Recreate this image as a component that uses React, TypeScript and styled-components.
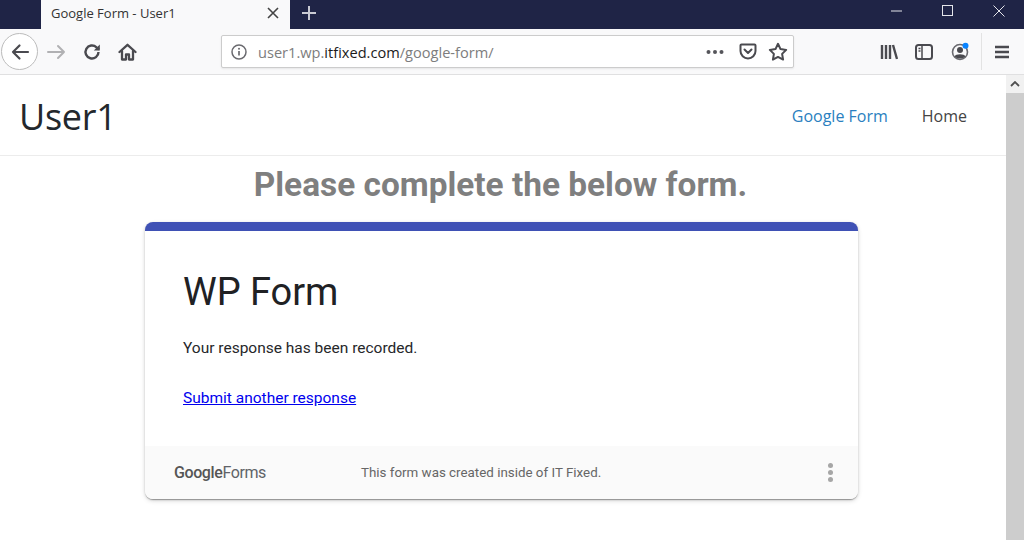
import React from "react";
import styled, { createGlobalStyle } from "styled-components";

const Global = createGlobalStyle`
  html, body { margin: 0; padding: 0; width: 1024px; height: 540px; overflow: hidden; background: #fff; }
  * { box-sizing: border-box; }
`;

const Page = styled.div`
  width: 1024px; height: 540px; display: flex; flex-direction: column; overflow: hidden;
  font-family: "Roboto", sans-serif;
`;
const TabBar = styled.div`
  height: 29px; flex: none; background: #1f2446; display: flex; align-items: stretch; padding-left: 41px;
`;
const Tab = styled.div`
  width: 249px; background: #f9f9fa; display: flex; align-items: center; justify-content: space-between;
  padding: 0 11px 3px 10px; font: 13px "Open Sans", sans-serif; color: #333;
`;
const NewTab = styled.div`
  width: 38px; display: flex; align-items: center; justify-content: center; padding-bottom: 3px;
`;
const Spacer = styled.div`flex: 1;`;
const WinButton = styled.div`
  width: 51px; display: flex; align-items: center; justify-content: center; padding-bottom: 8px;
`;
const WinButtons = styled.div`display: flex;`;
const Toolbar = styled.div`
  height: 46px; flex: none; background: #f9f9fa; border-bottom: 1px solid #e0e0e1; position: relative;
  display: flex; align-items: center; padding-left: 1px;
`;
const BackCircle = styled.div`
  width: 37px; height: 37px; border-radius: 50%; background: #fff; border: 1px solid #bcbcbc;
  display: flex; align-items: center; justify-content: center; flex: none;
`;
const NavIcon = styled.div`
  width: 36px; height: 30px; display: flex; align-items: center; justify-content: center; flex: none;
`;
const HomeIcon = styled(NavIcon)`margin-left: -1px;`;
const NavGroup = styled.div`display: flex; align-items: center; margin-right: 76px;`;
const UrlBar = styled.div`
  width: 573px; height: 33px; background: #fff; border: 1px solid #ccc; border-radius: 2px;
  box-shadow: 0 1px 2px rgba(0,0,0,.08); display: flex; align-items: center; padding: 0 5px 0 9px; flex: none;
`;
const UrlText = styled.div`
  font: 14.6px "Open Sans", sans-serif; color: #7d7d7d; margin-left: 11px; flex: 1; white-space: nowrap;
`;
const UrlStrong = styled.span`color: #1b1b1b;`;
const UrlIcons = styled.div`display: flex; align-items: center; gap: 10px;`;
const MoreDots = styled.svg`margin-right: 5px;`;
const PocketIcon = styled.svg`margin-right: 1px;`;
const RightIcons = styled.div`display: flex; align-items: center; margin-left: 77px;`;
const RightIcon = styled.div`
  width: 35.5px; height: 30px; display: flex; align-items: center; justify-content: center; position: relative; flex: none;
`;
const Divider = styled.div`width: 1px; height: 37px; background: #e3e3e3; margin: 0 3px; flex: none;`;
const Main = styled.div`flex: 1; display: flex; min-height: 0;`;
const Content = styled.div`flex: 1; min-width: 0; display: flex; flex-direction: column;`;
const Scrollbar = styled.div`width: 18px; flex: none; background: #f1f1f1; display: flex; flex-direction: column;`;
const ScrollUp = styled.div`height: 18px; background: #f1f1f1; display: flex; align-items: center; justify-content: center;`;
const ScrollThumb = styled.div`flex: 1; background: #cdcdcd;`;
const Header = styled.header`
  height: 81px; flex: none; border-bottom: 1px solid #ececec; display: flex; align-items: center;
  justify-content: space-between; padding: 2px 39px 0 19px;
`;
const Brand = styled.div`font: 36px "Open Sans", sans-serif; color: #23282d; letter-spacing: -.3px;`;
const Nav = styled.nav`display: flex; gap: 34px;`;
const NavLink = styled.a<{ $active?: boolean }>`
  font: 16px "Open Sans", sans-serif; color: ${(p) => (p.$active ? "#2a7fc0" : "#444")};
`;
const Heading = styled.h1`
  margin: 8px 0 0; height: 58px; text-align: center; font: 700 33.4px/41px "Roboto", sans-serif; color: #7f7f7f;
  padding-right: 5px;
`;
const Card = styled.section`
  width: 713px; height: 277px; margin-left: 145px; background: #fff; border-radius: 8px;
  border-top: 9px solid #3f51b5; overflow: hidden; display: flex; flex-direction: column;
  box-shadow: 0 2px 1px -1px rgba(0,0,0,.2), 0 1px 1px 0 rgba(0,0,0,.14), 0 1px 3px 0 rgba(0,0,0,.12), 0 2px 5px rgba(0,0,0,.12);
`;
const CardBody = styled.div`flex: 1; padding: 38px 38px 0;`;
const FormTitle = styled.h2`margin: 0; font: 400 38px/46px "Roboto", sans-serif; letter-spacing: -.05px; color: #202124;`;
const Recorded = styled.p`margin: 23px 0 0; font: 15.5px/20px "Roboto", sans-serif; color: #26272a;`;
const Another = styled.a`
  display: block; margin-top: 30px; font: 15.5px/20px "Roboto", sans-serif; color: #0000ee; text-decoration: underline;
`;
const CardFooter = styled.div`
  height: 53px; flex: none; background: #fafafa; display: flex; align-items: center; padding: 0 25px 0 29px;
`;
const Logo = styled.div`
  width: 187px; font: 16px "Roboto", sans-serif; color: #5f6368; letter-spacing: -.4px;
`;
const LogoStrong = styled.span`font-weight: 500; color: #555;`;
const Notice = styled.div`flex: 1; font: 13.37px "Roboto", sans-serif; color: #666;`;
const Dots = styled.div`display: flex; flex-direction: column; gap: 2px;`;
const Dot = styled.i`display: block; width: 5px; height: 5px; border-radius: 50%; background: #a6a6a6;`;

const S = { fill: "none", stroke: "#4a4a4f", strokeWidth: 2, strokeLinecap: "round" as const, strokeLinejoin: "round" as const };

export default function App() {
  return (
    <>
      <Global />
      <Page>
        <TabBar>
          <Tab>
            <span>Google Form - User1</span>
            <svg width="12" height="12" viewBox="0 0 12 12"><path d="M1 1l10 10M11 1L1 11" stroke="#444" strokeWidth="1.6" /></svg>
          </Tab>
          <NewTab>
            <svg width="16" height="16" viewBox="0 0 16 16"><path d="M8 1v14M1 8h14" stroke="#c9cad3" strokeWidth="2" /></svg>
          </NewTab>
          <Spacer />
          <WinButtons>
            <WinButton><svg width="12" height="2" viewBox="0 0 12 2"><path d="M0 1h11" stroke="#e4e5ea" strokeWidth="1" /></svg></WinButton>
            <WinButton><svg width="12" height="12" viewBox="0 0 12 12"><rect x=".5" y=".5" width="10" height="10" fill="none" stroke="#e4e5ea" /></svg></WinButton>
            <WinButton><svg width="12" height="12" viewBox="0 0 12 12"><path d="M.5.5l11 11M11.500.5l-11 11" stroke="#e4e5ea" /></svg></WinButton>
          </WinButtons>
        </TabBar>
        <Toolbar>
          <NavGroup>
            <BackCircle>
              <svg width="20" height="18" viewBox="0 0 20 18"><path d="M18 9H3M9.500 2.500L3 9l6.500 6.500" {...S} strokeWidth={2.2} /></svg>
            </BackCircle>
            <NavIcon>
              <svg width="19" height="16" viewBox="0 0 19 16"><path d="M1 8h16M11 2l6 6-6 6" {...S} stroke="#b1b1b3" /></svg>
            </NavIcon>
            <NavIcon>
              <svg width="18" height="18" viewBox="0 0 18 18"><path d="M15.500 9a6.500 6.500 0 1 1-2-4.700L16 6.500" {...S} strokeLinecap="butt" strokeWidth={2.4} /><path d="M16.800 1.500v6h-6z" fill="#4a4a4f" /></svg>
            </NavIcon>
            <HomeIcon>
              <svg width="19" height="18" viewBox="0 0 19 18"><path d="M1.500 9L9.500 1.800 17.500 9" {...S} strokeWidth={2.3} /><path d="M4 8v8.500h4V11.500h3v5h4V8" {...S} strokeWidth={2.3} /></svg>
            </HomeIcon>
          </NavGroup>
          <UrlBar>
            <svg width="16" height="16" viewBox="0 0 16 16"><circle cx="8" cy="8" r="7" fill="none" stroke="#6a6a6f" strokeWidth="1.500" /><path d="M8 7v4.500" stroke="#6a6a6f" strokeWidth="1.700" /><circle cx="8" cy="4.700" r="1" fill="#6a6a6f" /></svg>
            <UrlText>user1.wp.<UrlStrong>itfixed.com</UrlStrong>/google-form/</UrlText>
            <UrlIcons>
              <MoreDots width="18" height="6" viewBox="0 0 18 6"><circle cx="2.500" cy="3" r="2" fill="#55555a" /><circle cx="9" cy="3" r="2" fill="#55555a" /><circle cx="15.500" cy="3" r="2" fill="#55555a" /></MoreDots>
              <PocketIcon width="18" height="17" viewBox="0 0 18 17"><path d="M2.500 1.500h13a1 1 0 0 1 1 1V8a7.500 7.500 0 0 1-15 0V2.500a1 1 0 0 1 1-1z" {...S} /><path d="M5.500 6.500L9 10l3.500-3.500" {...S} /></PocketIcon>
              <svg width="20" height="19" viewBox="0 0 20 19"><path d="M10 1.800l2.500 5.300 5.700.8-4.100 4 1 5.700L10 14.900l-5.100 2.700 1-5.700-4.100-4 5.700-.8z" {...S} /></svg>
            </UrlIcons>
          </UrlBar>
          <RightIcons>
            <RightIcon>
              <svg width="18" height="16" viewBox="0 0 18 16"><path d="M2 1v14M6 1v14M10 1v14M13 1l4 14" {...S} strokeWidth={2.4} strokeLinecap="butt" /></svg>
            </RightIcon>
            <RightIcon>
              <svg width="18" height="16" viewBox="0 0 18 16"><rect x="1" y="1" width="16" height="14" rx="2.500" {...S} /><path d="M7 1v14M3.500 4.500h2M3.500 7h2" {...S} strokeWidth={1.5} strokeLinecap="butt" /></svg>
            </RightIcon>
            <RightIcon>
              <svg width="20" height="20" viewBox="0 0 20 20"><circle cx="10" cy="10" r="7.500" fill="none" stroke="#6a6a6f" strokeWidth="1.600" /><circle cx="10" cy="8" r="3" fill="#4a4a4f" /><path d="M4.500 14.500c1-3 10-3 11 0l-3 2h-5z" fill="#4a4a4f" /><circle cx="15.500" cy="3.700" r="3" fill="#0a84ff" /></svg>
            </RightIcon>
            <Divider />
            <RightIcon>
              <svg width="16" height="14" viewBox="0 0 16 14"><path d="M1 2h14M1 7h14M1 12h14" {...S} strokeWidth={2.3} strokeLinecap="butt" /></svg>
            </RightIcon>
          </RightIcons>
        </Toolbar>
        <Main>
          <Content>
            <Header>
              <Brand>User1</Brand>
              <Nav>
                <NavLink $active>Google Form</NavLink>
                <NavLink>Home</NavLink>
              </Nav>
            </Header>
            <Heading>Please complete the below form.</Heading>
            <Card>
              <CardBody>
                <FormTitle>WP Form</FormTitle>
                <Recorded>Your response has been recorded.</Recorded>
                <Another>Submit another response</Another>
              </CardBody>
              <CardFooter>
                <Logo><LogoStrong>Google</LogoStrong>Forms</Logo>
                <Notice>This form was created inside of IT Fixed.</Notice>
                <Dots><Dot /><Dot /><Dot /></Dots>
              </CardFooter>
            </Card>
          </Content>
          <Scrollbar>
            <ScrollUp>
              <svg width="10" height="6" viewBox="0 0 10 6"><path d="M1 5l4-4 4 4" fill="none" stroke="#505050" strokeWidth="1.800" /></svg>
            </ScrollUp>
            <ScrollThumb />
          </Scrollbar>
        </Main>
      </Page>
    </>
  );
}
